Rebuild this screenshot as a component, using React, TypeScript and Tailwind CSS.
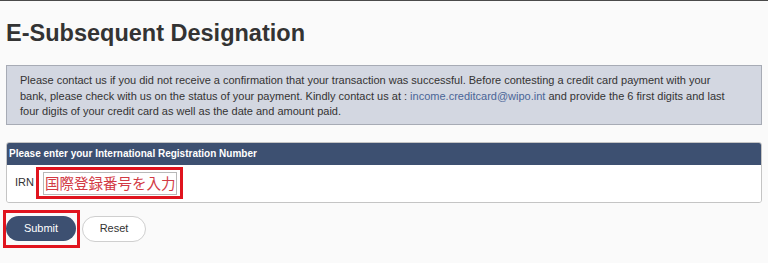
export default function App() {
  return (
    <div className="min-h-[263px] bg-[#fafafa] border-t border-[#4a4a4a] font-['Liberation_Sans',Arial,sans-serif] text-[#333]">
      <div className="px-[6px]">
        {/* Title */}
        <h1 className="pt-[15px] text-[23.5px] font-bold leading-[34px] text-[#333]">E-Subsequent Designation</h1>

        {/* Notice */}
        <div className="mt-[15px] border border-[#a7abb5] bg-[#d3d7e1] pl-[13px] pr-[10px] pt-[7px] pb-[4px] text-[11px] leading-[15.5px] text-[#333]">
          Please contact us if you did not receive a confirmation that your transaction was successful. Before contesting a credit card payment with your
          <br />
          bank, please check with us on the status of your payment. Kindly contact us at :{' '}
          <a className="text-[#4a6597]">income.creditcard@wipo.int</a> and provide the 6 first digits and last
          <br />
          four digits of your credit card as well as the date and amount paid.
        </div>

        {/* IRN panel */}
        <div className="mt-[17px] rounded-[3px] border border-[#c4c4c4] overflow-hidden">
          <div className="flex h-[22px] items-center bg-[#3d5071] px-[2px] text-[10px] font-bold text-white">
            Please enter your International Registration Number
          </div>
          <div className="flex items-center bg-white pl-[8px] pt-[2px] pb-[3px]">
            <span className="text-[11px] text-[#333]">IRN</span>
            <div className="ml-[2px] border-[3px] border-[#e0141e] pl-[4px] pr-[3px] pt-[2px] pb-[1px]">
              <div className="flex h-[23px] w-[134px] items-center overflow-hidden whitespace-nowrap border border-[#b8b8b8] bg-white pl-[1px] font-['Noto_Sans_CJK_JP',sans-serif] text-[14.5px] leading-none text-[#d23a45]">
                国際登録番号を入力
              </div>
            </div>
          </div>
        </div>

        {/* Actions */}
        <div className="mt-[7px] flex items-center">
          <div className="-ml-[3px] border-[3px] border-[#e0141e] pt-[3px] pb-[4px] pr-[1px]">
            <button className="flex h-[25px] w-[70px] items-center justify-center rounded-full bg-[#3d5071] text-[11px] text-white">
              Submit
            </button>
          </div>
          <button className="ml-[2px] flex h-[26px] w-[64px] items-center justify-center rounded-full border border-[#cfcfcf] bg-white text-[11px] text-[#333]">
            Reset
          </button>
        </div>
      </div>
    </div>
  );
}
